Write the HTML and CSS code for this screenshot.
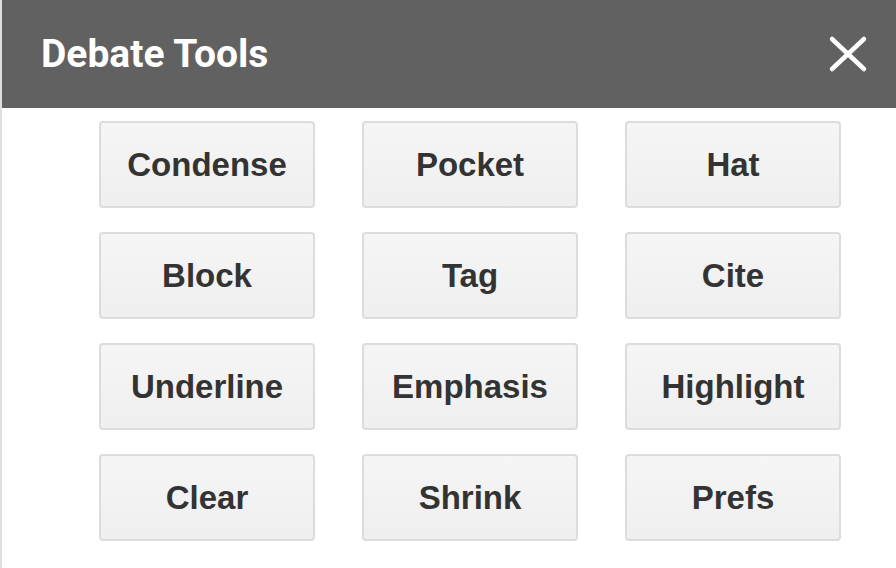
FILE: index.html
```html
<!DOCTYPE html>
<html>
<head>
<meta charset="utf-8">
<link rel="stylesheet" href="styles.css">
</head>
<body>
<div class="panel">
  <header class="bar">
    <h1 class="title">Debate Tools</h1>
    <button class="close" aria-label="Close">
      <svg width="40" height="40" viewBox="0 0 40 40"><path d="M4 5 L36 35 M36 5 L4 35" stroke="#fff" stroke-width="4.5" stroke-linecap="round" fill="none"/></svg>
    </button>
  </header>
  <main class="grid">
    <button class="tool">Condense</button>
    <button class="tool">Pocket</button>
    <button class="tool">Hat</button>
    <button class="tool">Block</button>
    <button class="tool">Tag</button>
    <button class="tool">Cite</button>
    <button class="tool">Underline</button>
    <button class="tool">Emphasis</button>
    <button class="tool">Highlight</button>
    <button class="tool">Clear</button>
    <button class="tool">Shrink</button>
    <button class="tool">Prefs</button>
  </main>
</div>
</body>
</html>
```
FILE: styles.css
```css
html, body {
  margin: 0;
  padding: 0;
  background: #fff;
}
.panel {
  width: 894px;
  height: 568px;
  border-left: 2px solid #dedede;
  display: flex;
  flex-direction: column;
}
.bar {
  height: 108px;
  background: #616161;
  display: flex;
  align-items: center;
  justify-content: space-between;
  padding: 0 28px 0 39px;
  box-sizing: border-box;
  flex: none;
}
.title {
  margin: 0;
  font-family: Roboto, "Liberation Sans", sans-serif;
  font-weight: 700;
  font-size: 39px;
  color: #fff;
  letter-spacing: 0;
}
.close {
  border: 0;
  background: transparent;
  padding: 0;
  width: 40px;
  height: 40px;
  display: flex;
  align-items: center;
  justify-content: center;
  cursor: pointer;
}
.grid {
  display: grid;
  grid-template-columns: repeat(3, 216px);
  grid-auto-rows: 87px;
  column-gap: 47px;
  row-gap: 24px;
  padding: 13px 0 0 97px;
}
.tool {
  box-sizing: border-box;
  border: 2px solid #dcdcdc;
  border-radius: 4px;
  background: linear-gradient(#f5f5f5, #efefef);
  font-family: "Liberation Sans", Arial, sans-serif;
  font-weight: 700;
  font-size: 33px;
  color: #333;
  padding: 0;
  margin: 0;
  cursor: pointer;
}
```
